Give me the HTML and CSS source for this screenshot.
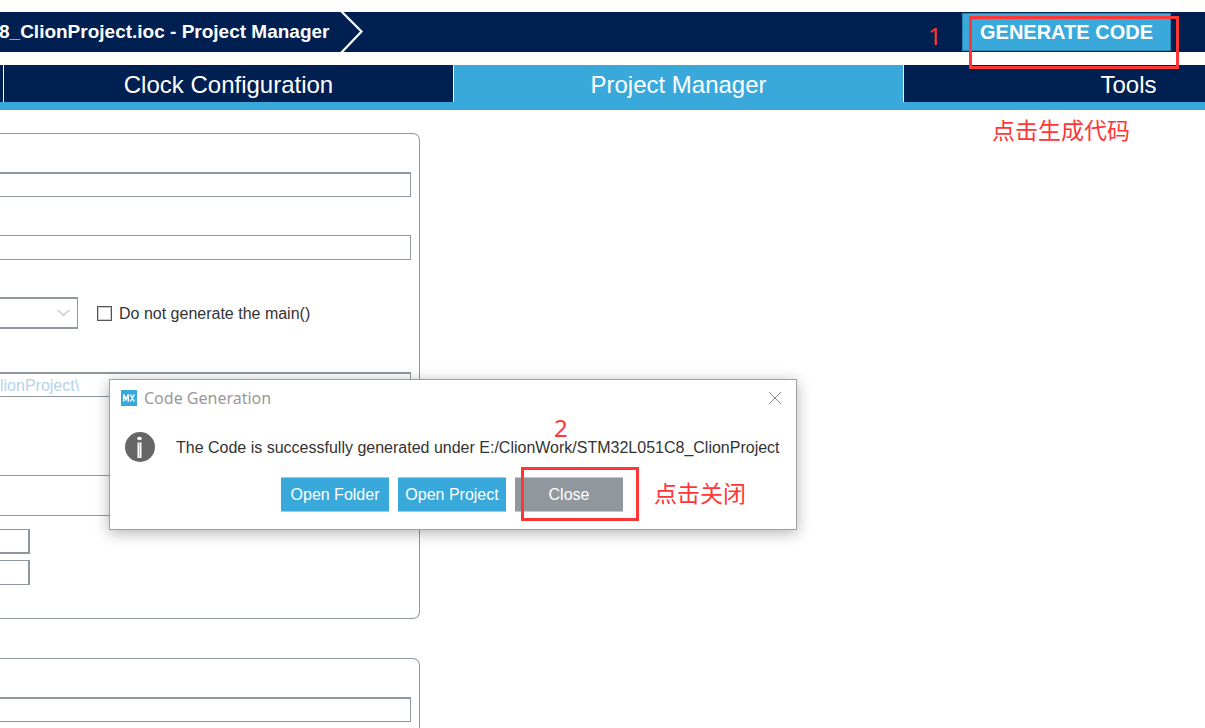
FILE: index.html
```
<!DOCTYPE html>
<html lang="zh-CN">
<head>
    <meta charset="UTF-8">
    <meta name="viewport" content="width=device-width, initial-scale=1.0">
    <title>Project Manager</title>
    <link rel="stylesheet" href="styles.css">
</head>
<body>
    <header class="topbar">
        <h1 class="crumb">8_ClionProject.ioc - Project Manager</h1>
        <svg class="crumb-arrow" width="24" height="40" viewBox="0 0 24 40" aria-hidden="true">
            <path d="M1 -1 L21.500 19.500 L1 41" fill="none" stroke="#fff" stroke-width="2.200"/>
        </svg>
        <div class="generate">
            <button class="btn-generate" type="button">GENERATE CODE</button>
            <span class="mark-box mark-box-generate"></span>
            <span class="mark mark-number mark-one">1</span>
            <span class="mark mark-generate">点击生成代码</span>
        </div>
    </header>

    <nav class="tabs">
        <span class="tab"></span>
        <a class="tab" href="#clock">Clock Configuration</a>
        <a class="tab active" href="#project">Project Manager</a>
        <a class="tab" href="#tools">Tools</a>
    </nav>

    <main class="content">
        <section class="group">
            <input class="field heavy" type="text" aria-label="Project Name">
            <input class="field" type="text" aria-label="Project Location">
            <div class="row">
                <div class="select-wrap">
                    <select class="select" aria-label="Application Structure"><option></option></select>
                    <svg class="select-arrow" width="13" height="7" viewBox="0 0 13 7" aria-hidden="true">
                        <path d="M0 0.800 H2 L6.500 5.500 L11 0.800 H13" fill="none" stroke="#c4c6c8" stroke-width="1.300"/>
                    </svg>
                </div>
                <input class="check" type="checkbox" id="noMain">
                <label for="noMain">Do not generate the main()</label>
            </div>
            <input class="field heavy folder" type="text" value="lionProject\" aria-label="Toolchain Folder" readonly>
            <div class="panel"></div>
            <input class="field small heavy-bottom" type="text" aria-label="Minimum Heap Size">
            <input class="field small" type="text" aria-label="Minimum Stack Size">
        </section>

        <section class="group">
            <input class="field heavy" type="text" aria-label="Mcu Reference">
        </section>
    </main>

    <div class="dialog" role="dialog" aria-labelledby="dialogTitle">
        <div class="dialog-header">
            <svg width="16" height="16" viewBox="0 0 16 16" aria-hidden="true">
                <rect width="16" height="16" fill="#39a9dc"/>
                <path d="M2.700 11.500 V4.500 L5 9.500 L7.300 4.500 V11.500 M9.300 4.500 L13.300 11.500 M13.300 4.500 L9.300 11.500" fill="none" stroke="#fff" stroke-width="1.500"/>
            </svg>
            <h2 id="dialogTitle">Code Generation</h2>
            <button class="dialog-close" type="button" aria-label="Close">
                <svg width="14" height="14" viewBox="0 0 14 14">
                    <path d="M1 1 L13 13 M13 1 L1 13" stroke="#8a8a8a" stroke-width="1"/>
                </svg>
            </button>
        </div>
        <div class="dialog-message">
            <svg width="30" height="30" viewBox="0 0 30 30" aria-hidden="true">
                <circle cx="15" cy="15" r="15" fill="#666"/>
                <ellipse cx="14.500" cy="6.500" rx="2.300" ry="1.700" fill="#fff"/>
                <rect x="12.500" y="10.500" width="4" height="15.500" fill="#fff"/>
                <path d="M14.500 11 V25.500" stroke="#aaa" stroke-width="0.800"/>
            </svg>
            <p>The Code is successfully generated under E:/ClionWork/STM32L051C8_ClionProject</p>
        </div>
        <div class="dialog-buttons">
            <button class="btn" type="button">Open Folder</button>
            <button class="btn" type="button">Open Project</button>
            <div class="close-wrap">
                <button class="btn btn-grey" type="button">Close</button>
                <span class="mark-box mark-box-close"></span>
                <span class="mark mark-number mark-two">2</span>
                <span class="mark mark-close">点击关闭</span>
            </div>
        </div>
    </div>
</body>
</html>
```
FILE: styles.css
```
* {
    margin: 0;
    padding: 0;
    box-sizing: border-box;
}

body {
    font-family: "Liberation Sans", Arial, sans-serif;
    font-size: 16px;
    color: #333;
    background: #fff;
    min-height: 100vh;
    padding-top: 12px;
    overflow: hidden;
    position: relative;
}

button, input, select {
    font: inherit;
}

/* top bar */
.topbar {
    display: flex;
    align-items: center;
    height: 40px;
    padding-right: 34px;
    background: #002052;
}

.crumb {
    margin-left: -1px;
    font-size: 19px;
    line-height: 40px;
    color: #fff;
    white-space: nowrap;
}

.crumb-arrow {
    margin-left: 11px;
}

.generate {
    position: relative;
    margin-left: auto;
}

.btn-generate {
    display: block;
    width: 209px;
    height: 38px;
    border: 1px solid #2b86b8;
    background: #39a9dc;
    color: #fff;
    font-size: 20px;
    font-weight: bold;
}

/* tabs */
.tabs {
    display: grid;
    grid-template-columns: 4px repeat(3, max(450px, 37vw));
    margin-top: 13px;
    border-bottom: 8px solid #39a9dc;
    overflow: hidden;
}

.tab {
    height: 37px;
    line-height: 40px;
    border-right: 1px solid #fff;
    background: #002052;
    color: #fff;
    font-size: 24px;
    text-align: center;
    text-decoration: none;
}

.tab.active {
    background: #39a9dc;
}

/* settings groups, running off the left edge */
.content {
    display: flex;
    flex-direction: column;
    gap: 39px;
    padding-top: 23px;
}

.group {
    display: flex;
    flex-direction: column;
    width: max(420px, 34vw);
    padding: 38px 8px 33px 0;
    border: 1px solid #90989e;
    border-left: none;
    border-radius: 0 7px 7px 0;
}

.field {
    width: 100%;
    height: 25px;
    border: 1px solid #90989e;
    border-left: none;
    background: #fff;
    color: #333;
    outline: none;
}

.field.heavy {
    border-top-width: 2px;
}

.field.heavy-bottom {
    border-bottom-width: 2px;
}

.field + .field {
    margin-top: 38px;
}

.row {
    display: flex;
    align-items: center;
    margin: 37px 0 43px;
}

.row label {
    line-height: 20px;
    padding-top: 2px;
}

.select-wrap {
    position: relative;
    width: 78px;
    margin-right: 19px;
}

.select {
    display: block;
    appearance: none;
    width: 100%;
    height: 32px;
    border: 2px solid #90989e;
    border-width: 2px 1px 2px 0;
    border-radius: 0;
    background: #fff;
}

.select-arrow {
    position: absolute;
    right: 8px;
    top: 13px;
}

.check {
    appearance: none;
    width: 15px;
    height: 15px;
    margin-right: 7px;
    border: 1px solid #555;
    background: #fff;
    box-shadow: inset 0 0 0 1px #ccc;
}

.field.folder {
    padding-top: 2px;
    color: #b4d3ea;
}

.panel {
    height: 41px;
    margin: 78px 0 13px;
    border: 1px solid #90989e;
    border-left: none;
}

.field.small {
    width: 30px;
    border-right-width: 2px;
}

.field.small + .field.small {
    margin-top: 6px;
}

/* dialog */
.dialog {
    position: absolute;
    left: 109px;
    top: 379px;
    width: 688px;
    padding: 10px 11px 17px;
    border: 1px solid #a0a0a0;
    background: #fff;
    box-shadow: 0 3px 14px rgba(0, 0, 0, 0.3);
}

.dialog-header {
    display: flex;
    align-items: center;
    gap: 7px;
    height: 16px;
}

.dialog-header h2 {
    font-family: "Noto Sans", "Open Sans", sans-serif;
    font-size: 16px;
    font-weight: normal;
    color: #999;
}

.dialog-close {
    margin-left: auto;
    width: 20px;
    height: 16px;
    border: none;
    background: none;
}

.dialog-close svg {
    display: block;
    margin: 0 auto;
}

.dialog-message {
    display: flex;
    align-items: center;
    gap: 21px;
    margin: 26px 0 15px;
    padding-left: 4px;
    white-space: nowrap;
}

.dialog-message p {
    line-height: 18px;
    padding-top: 2px;
}

.dialog-buttons {
    display: flex;
    justify-content: center;
    gap: 9px;
    padding-right: 2px;
}

.btn {
    display: block;
    width: 108px;
    height: 35px;
    border: 1px solid #8fcfec;
    border-width: 1px 0;
    background: #39a9dc;
    color: #fff;
    white-space: nowrap;
}

.btn-grey {
    border-color: #c3c8cb;
    background: #90989e;
}

.close-wrap {
    position: relative;
}

/* red step marks drawn over the window */
.mark {
    position: absolute;
    font-family: "Noto Sans CJK SC", sans-serif;
    font-size: 23px;
    line-height: 30px;
    color: #ff3636;
    white-space: nowrap;
}

.mark-number {
    font-family: "Noto Sans", sans-serif;
    font-size: 24px;
    line-height: 24px;
}

.mark-box {
    position: absolute;
    border: 3px solid #ff3636;
    pointer-events: none;
}

.mark-box-generate {
    left: 7px;
    top: 3px;
    width: 210px;
    height: 53px;
}

.mark-one {
    left: -34px;
    top: 11px;
}

.mark-generate {
    left: 30px;
    top: 101px;
}

.mark-box-close {
    left: 6px;
    top: -10px;
    width: 118px;
    height: 54px;
}

.mark-two {
    left: 39px;
    top: -61px;
}

.mark-close {
    left: 139px;
    top: 0;
}
```
